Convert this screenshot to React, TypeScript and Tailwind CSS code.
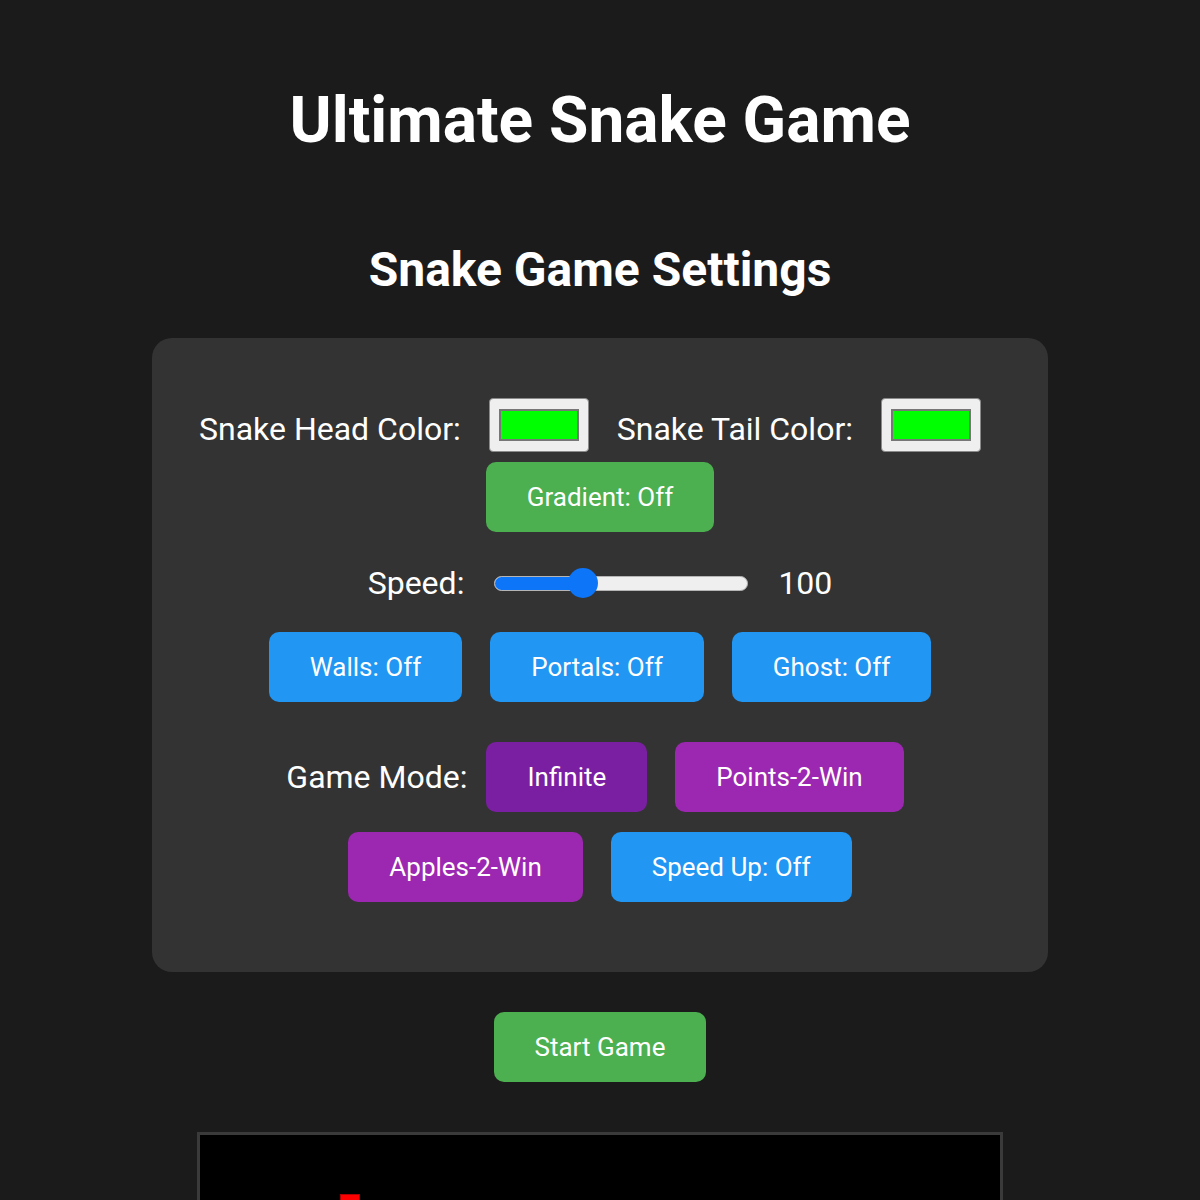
import { useState } from 'react';

type Mode = 'infinite' | 'points' | 'apples';

const btn =
  'h-[70px] rounded-[10px] px-[41px] text-[26px] leading-none text-white';

function ColorSwatch({ color }: { color: string }) {
  return (
    <div className="flex h-[54px] w-[100px] items-center justify-center rounded-[4px] border border-[#8a8a8a] bg-[#efefef]">
      <div className="h-[32px] w-[80px] border-2 border-[#777]" style={{ backgroundColor: color }} />
    </div>
  );
}

function SpeedSlider({ value, min, max }: { value: number; min: number; max: number }) {
  const pct = ((value - min) / (max - min)) * 100;
  return (
    <div className="relative h-[15px] w-[254px] rounded-full border border-[#b5b5b5] bg-[#efefef]">
      <div className="h-full rounded-l-full bg-[#0d75f8]" style={{ width: `${pct}%` }} />
      <div
        className="absolute top-1/2 h-[30px] w-[30px] -translate-x-1/2 -translate-y-1/2 rounded-full bg-[#0d75f8]"
        style={{ left: `${pct}%` }}
      />
    </div>
  );
}

export default function App() {
  const [mode] = useState<Mode>('infinite');
  const speed = 100;

  return (
    <div className="flex min-h-[1200px] flex-col items-center bg-[#1b1b1b] pb-10 font-['Roboto',sans-serif] text-white">
      <h1 className="mt-[83px] text-[64px] font-bold leading-[75px]">Ultimate Snake Game</h1>
      <h2 className="mt-[84px] text-[48px] font-bold leading-[56px]">Snake Game Settings</h2>

      {/* settings panel */}
      <div className="mt-[40px] flex w-[896px] flex-col items-center rounded-[20px] bg-[#333] pb-[70px] pt-[60px]">
        <div className="flex h-[54px] items-center gap-[28px] pr-5 text-[32px] leading-none">
          <span className="mt-2">Snake Head Color:</span>
          <ColorSwatch color="#00ff00" />
          <span className="mt-2">Snake Tail Color:</span>
          <ColorSwatch color="#00ff00" />
        </div>
        <button className={`${btn} mt-[10px] bg-[#4caf50]`}>Gradient: Off</button>

        <div className="mt-[31px] flex h-10 items-center gap-[30px] text-[32px]">
          <span>Speed:</span>
          <SpeedSlider value={speed} min={20} max={250} />
          <span>{speed}</span>
        </div>

        <div className="mt-[29px] flex gap-[28px]">
          <button className={`${btn} bg-[#2196f3]`}>Walls: Off</button>
          <button className={`${btn} bg-[#2196f3]`}>Portals: Off</button>
          <button className={`${btn} bg-[#2196f3]`}>Ghost: Off</button>
        </div>

        <div className="mt-10 flex items-center gap-[19px] pr-[10px]">
          <span className="text-[32px]">Game Mode:</span>
          <button className={`${btn} ${mode === 'infinite' ? 'bg-[#7b1fa2]' : 'bg-[#9c27b0]'}`}>Infinite</button>
          <button className={`${btn} ml-[9px] ${mode === 'points' ? 'bg-[#7b1fa2]' : 'bg-[#9c27b0]'}`}>
            Points-2-Win
          </button>
        </div>
        <div className="mt-5 flex gap-[28px]">
          <button className={`${btn} ${mode === 'apples' ? 'bg-[#7b1fa2]' : 'bg-[#9c27b0]'}`}>Apples-2-Win</button>
          <button className={`${btn} bg-[#2196f3]`}>Speed Up: Off</button>
        </div>
      </div>

      <button className={`${btn} mt-10 bg-[#4caf50]`}>Start Game</button>

      {/* game board */}
      <div className="mt-[50px] h-[606px] w-[806px] border-[3px] border-[#3a3a3a] bg-black">
        <div className="ml-[140px] mt-[59px] h-5 w-5 border border-[#b00000] bg-[#ff0000]" />
      </div>
    </div>
  );
}
